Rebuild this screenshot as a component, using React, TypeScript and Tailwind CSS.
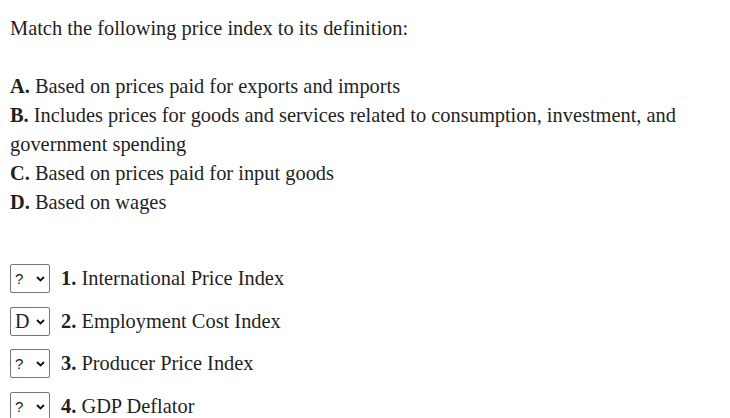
import React from 'react';

const defs = [
  { key: 'A', text: 'Based on prices paid for exports and imports' },
  { key: 'B', text: 'Includes prices for goods and services related to consumption, investment, and government spending' },
  { key: 'C', text: 'Based on prices paid for input goods' },
  { key: 'D', text: 'Based on wages' },
];

const items = [
  { n: 1, label: 'International Price Index', value: '?' },
  { n: 2, label: 'Employment Cost Index', value: 'D' },
  { n: 3, label: 'Producer Price Index', value: '?' },
  { n: 4, label: 'GDP Deflator', value: '?' },
];

function FakeSelect({ value }: { value: string }) {
  return (
    <div className="flex h-[29px] w-[40px] shrink-0 items-center justify-between rounded-[2px] border border-[#767676] bg-white pl-[4px] pr-[4px]">
      {value === '?' ? (
        <span className="font-['Liberation_Sans',sans-serif] text-[15px] text-[#222]">?</span>
      ) : (
        <span className="text-[20px] text-[#222]">{value}</span>
      )}
      <svg width="9" height="6" viewBox="0 0 9 6" className="mt-[1px]">
        <path d="M1 1l3.5 3.5L8 1" fill="none" stroke="#111" strokeWidth="1.8" />
      </svg>
    </div>
  );
}

export default function App() {
  return (
    <div className="h-[418px] w-[730px] overflow-hidden bg-white px-[10px] pt-[14px] font-['Liberation_Serif',serif] text-[20.4px] leading-[29px] text-[#1f1f1f]">
      <p>Match the following price index to its definition:</p>
      <div className="mt-[29px]">
        {defs.map((d) => (
          <p key={d.key}>
            <b className="font-semibold">{d.key}.</b> {d.text}
          </p>
        ))}
      </div>
      <div className="mt-[47px] flex flex-col gap-[13.5px]">
        {items.map((it) => (
          <div key={it.n} className="flex items-center gap-[11px]">
            <FakeSelect value={it.value} />
            <span>
              <b className="font-semibold">{it.n}.</b> {it.label}
            </span>
          </div>
        ))}
      </div>
    </div>
  );
}
